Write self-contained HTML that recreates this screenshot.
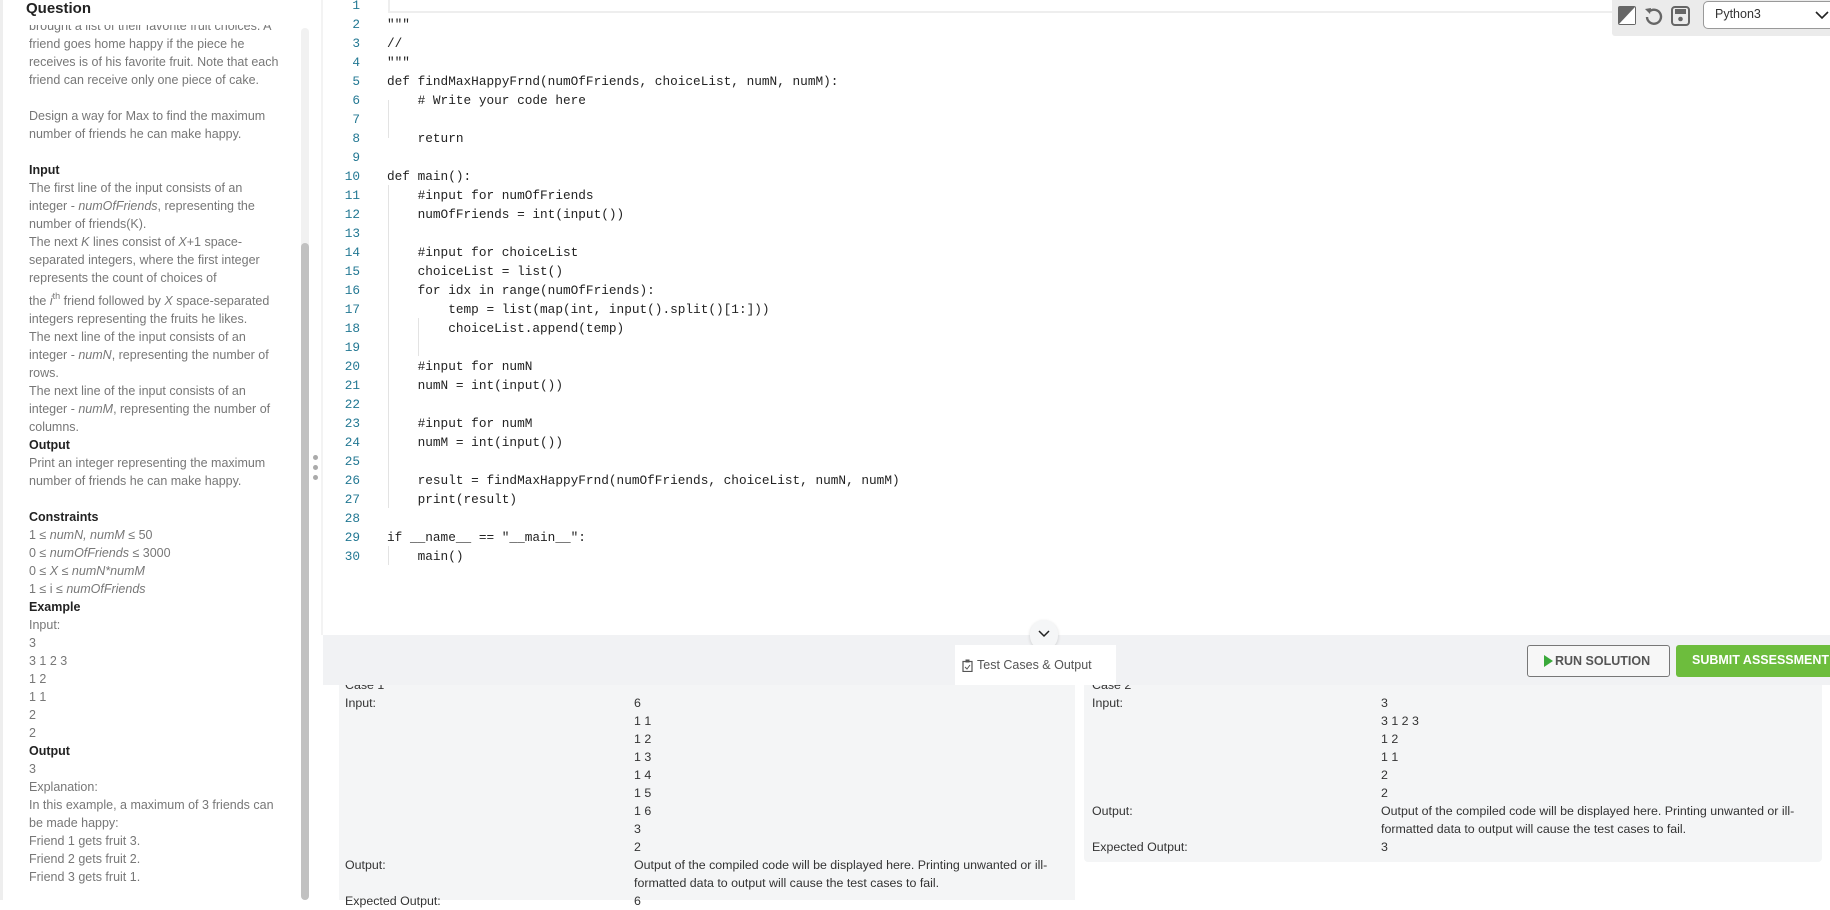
<!DOCTYPE html>
<html><head><meta charset="utf-8"><style>
*{margin:0;padding:0;box-sizing:border-box}
body{width:1830px;height:900px;overflow:hidden;background:#fff;position:relative;font-family:"Liberation Sans",sans-serif}
.a{position:absolute;white-space:pre}
#left{position:absolute;left:0;top:0;width:316px;height:900px;background:#fff;border-left:3px solid #eee;overflow:hidden}
.t{position:absolute;left:26px;font-size:12.5px;color:#777;line-height:18px;white-space:nowrap}
.h{color:#222;font-weight:bold}
.ln{position:absolute;width:40px;left:320px;text-align:right;font-family:"Liberation Mono",monospace;font-size:12.75px;color:#237893;line-height:19px;white-space:pre}
.cd{position:absolute;left:387px;font-family:"Liberation Mono",monospace;font-size:12.75px;color:#222;line-height:19px;white-space:pre}
.g{position:absolute;width:1px;background:#e3e3e3}
.cs{position:absolute;font-size:12.4px;color:#333;line-height:18px;white-space:nowrap}
sup{font-size:9px;line-height:0;vertical-align:6px}
</style></head><body>
<div id="left">
<div class="t h" style="left:23px;top:0;font-size:15px;line-height:18px">Question</div>
<div class="t" style="top:17px;clip-path:inset(8px 0 0 0)">brought a list of their favorite fruit choices. A</div>
<div class="t" style="top:35px">friend goes home happy if the piece he</div>
<div class="t" style="top:53px">receives is of his favorite fruit. Note that each</div>
<div class="t" style="top:71px">friend can receive only one piece of cake.</div>
<div class="t" style="top:107px">Design a way for Max to find the maximum</div>
<div class="t" style="top:125px">number of friends he can make happy.</div>
<div class="t h" style="top:161px">Input</div>
<div class="t" style="top:179px">The first line of the input consists of an</div>
<div class="t" style="top:197px">integer - <i>numOfFriends</i>, representing the</div>
<div class="t" style="top:215px">number of friends(K).</div>
<div class="t" style="top:233px">The next <i>K</i> lines consist of <i>X</i>+1 space-</div>
<div class="t" style="top:251px">separated integers, where the first integer</div>
<div class="t" style="top:269px">represents the count of choices of</div>
<div class="t" style="top:292px">the <i>i</i><sup>th</sup> friend followed by <i>X</i> space-separated</div>
<div class="t" style="top:310px">integers representing the fruits he likes.</div>
<div class="t" style="top:328px">The next line of the input consists of an</div>
<div class="t" style="top:346px">integer - <i>numN</i>, representing the number of</div>
<div class="t" style="top:364px">rows.</div>
<div class="t" style="top:382px">The next line of the input consists of an</div>
<div class="t" style="top:400px">integer - <i>numM</i>, representing the number of</div>
<div class="t" style="top:418px">columns.</div>
<div class="t h" style="top:436px">Output</div>
<div class="t" style="top:454px">Print an integer representing the maximum</div>
<div class="t" style="top:472px">number of friends he can make happy.</div>
<div class="t h" style="top:508px">Constraints</div>
<div class="t" style="top:526px">1 ≤ <i>numN, numM</i> ≤ 50</div>
<div class="t" style="top:544px">0 ≤ <i>numOfFriends</i> ≤ 3000</div>
<div class="t" style="top:562px">0 ≤ <i>X</i> ≤ <i>numN*numM</i></div>
<div class="t" style="top:580px">1 ≤ i ≤ <i>numOfFriends</i></div>
<div class="t h" style="top:598px">Example</div>
<div class="t" style="top:616px">Input:</div>
<div class="t" style="top:634px">3</div>
<div class="t" style="top:652px">3 1 2 3</div>
<div class="t" style="top:670px">1 2</div>
<div class="t" style="top:688px">1 1</div>
<div class="t" style="top:706px">2</div>
<div class="t" style="top:724px">2</div>
<div class="t h" style="top:742px">Output</div>
<div class="t" style="top:760px">3</div>
<div class="t" style="top:778px">Explanation:</div>
<div class="t" style="top:796px">In this example, a maximum of 3 friends can</div>
<div class="t" style="top:814px">be made happy:</div>
<div class="t" style="top:832px">Friend 1 gets fruit 3.</div>
<div class="t" style="top:850px">Friend 2 gets fruit 2.</div>
<div class="t" style="top:868px">Friend 3 gets fruit 1.</div>
<div style="position:absolute;left:298px;top:28px;width:8px;height:872px;background:#f1f1f1;border-radius:4px"></div>
<div style="position:absolute;left:298px;top:243px;width:8px;height:657px;background:#c1c1c1;border-radius:4px"></div>
</div>
<div style="position:absolute;left:313px;top:455px;width:5px;height:5px;border-radius:50%;background:#aaa"></div>
<div style="position:absolute;left:313px;top:465px;width:5px;height:5px;border-radius:50%;background:#aaa"></div>
<div style="position:absolute;left:313px;top:475px;width:5px;height:5px;border-radius:50%;background:#aaa"></div>
<div style="position:absolute;left:321px;top:0;width:2px;height:635px;background:#f3f3f3"></div>

<div style="position:absolute;left:388px;top:-4px;width:1226px;height:17px;border:2px solid #eeeeee"></div>
<div class="g" style="left:388px;top:100px;height:38px"></div>
<div class="g" style="left:388px;top:185px;height:323px"></div>
<div class="g" style="left:418px;top:318px;height:38px"></div>
<div class="g" style="left:388px;top:546px;height:19px"></div>

<div class="ln" style="top:-4px">1
2
3
4
5
6
7
8
9
10
11
12
13
14
15
16
17
18
19
20
21
22
23
24
25
26
27
28
29
30</div>
<div class="cd" style="top:-4px">
"""
//
"""
def findMaxHappyFrnd(numOfFriends, choiceList, numN, numM):
    # Write your code here

    return

def main():
    #input for numOfFriends
    numOfFriends = int(input())

    #input for choiceList
    choiceList = list()
    for idx in range(numOfFriends):
        temp = list(map(int, input().split()[1:]))
        choiceList.append(temp)

    #input for numN
    numN = int(input())

    #input for numM
    numM = int(input())

    result = findMaxHappyFrnd(numOfFriends, choiceList, numN, numM)
    print(result)

if __name__ == "__main__":
    main()</div>

<div style="position:absolute;left:1612px;top:0;width:218px;height:36px;background:#ebebeb;border-radius:0 0 0 3px"></div>
<svg style="position:absolute;left:1616px;top:4px" width="90" height="24" viewBox="0 0 90 24">
<rect x="2" y="2" width="18" height="19" rx="2" fill="#666"/><path d="M19 3 L19 20 L3 20 Z" fill="#fff"/>
<path d="M34 7 A7 7 0 1 1 31 13" fill="none" stroke="#666" stroke-width="2.4"/><path d="M29 5 L35 4 L34 10 Z" fill="#666"/>
<rect x="56" y="3" width="17" height="18" rx="3" fill="none" stroke="#666" stroke-width="2"/><rect x="59" y="5" width="11" height="5" fill="#666"/><circle cx="64.5" cy="15" r="2.3" fill="#666"/>
</svg>
<div style="position:absolute;left:1703px;top:1px;width:140px;height:28px;background:#fff;border:1px solid #999;border-radius:5px"></div>
<div class="a" style="left:1715px;top:7px;font-size:12.5px;color:#333">Python3</div>
<svg style="position:absolute;left:1815px;top:10px" width="14" height="10"><path d="M1 2 L7 8 L13 2" fill="none" stroke="#222" stroke-width="1.6"/></svg>

<div style="position:absolute;left:323px;top:635px;width:1507px;height:50px;background:#f1f2f4"></div>
<div style="position:absolute;left:1030px;top:620px;width:28px;height:30px;border-radius:14px;background:#f5f6f7;box-shadow:0 1px 3px rgba(0,0,0,.15)"></div>
<svg style="position:absolute;left:1038px;top:630px" width="12" height="8"><path d="M1 1 L6 6 L11 1" fill="none" stroke="#222" stroke-width="1.5"/></svg>
<div style="position:absolute;left:955px;top:645px;width:161px;height:40px;background:#fff"></div>
<svg style="position:absolute;left:962px;top:659px" width="11" height="13"><rect x="1" y="2.5" width="9" height="10" fill="none" stroke="#555" stroke-width="1.2"/><rect x="3.5" y="0.5" width="4" height="3" fill="#555"/><path d="M3 8 L5 10 L8 6" fill="none" stroke="#555" stroke-width="1"/></svg>
<div class="a" style="left:977px;top:658px;font-size:12.5px;color:#555">Test Cases &amp; Output</div>
<div style="position:absolute;left:1527px;top:645px;width:143px;height:32px;border:1px solid #777;border-radius:3px;background:#f7f7f7"></div>
<svg style="position:absolute;left:1544px;top:655px" width="9" height="12"><path d="M0 0 L9 6 L0 12 Z" fill="#3aa93a"/></svg>
<div class="a" style="left:1555px;top:654px;font-size:12.5px;font-weight:bold;color:#555">RUN SOLUTION</div>
<div style="position:absolute;left:1676px;top:645px;width:160px;height:32px;background:#6dbd3d;border-radius:3px"></div>
<div class="a" style="left:1692px;top:653px;font-size:12.5px;font-weight:bold;color:#fff">SUBMIT ASSESSMENT</div>

<div style="position:absolute;left:339px;top:685px;width:736px;height:215px;background:#f4f5f6;overflow:hidden">
<div class="cs" style="left:6px;top:-9px">Case 1</div>
</div>
<div style="position:absolute;left:1084px;top:685px;width:738px;height:177px;background:#f4f5f6;border-radius:0 0 4px 4px;overflow:hidden">
<div class="cs" style="left:8px;top:-9px">Case 2</div>
</div>
<div class="cs" style="left:345px;top:694px">Input:</div>
<div class="cs" style="left:634px;top:694px">6<br>1 1<br>1 2<br>1 3<br>1 4<br>1 5<br>1 6<br>3<br>2</div>
<div class="cs" style="left:345px;top:856px">Output:</div>
<div class="cs" style="left:634px;top:856px">Output of the compiled code will be displayed here. Printing unwanted or ill-<br>formatted data to output will cause the test cases to fail.</div>
<div class="cs" style="left:345px;top:892px">Expected Output:</div>
<div class="cs" style="left:634px;top:892px">6</div>
<div class="cs" style="left:1092px;top:694px">Input:</div>
<div class="cs" style="left:1381px;top:694px">3<br>3 1 2 3<br>1 2<br>1 1<br>2<br>2</div>
<div class="cs" style="left:1092px;top:802px">Output:</div>
<div class="cs" style="left:1381px;top:802px">Output of the compiled code will be displayed here. Printing unwanted or ill-<br>formatted data to output will cause the test cases to fail.</div>
<div class="cs" style="left:1092px;top:838px">Expected Output:</div>
<div class="cs" style="left:1381px;top:838px">3</div>
</body></html>
